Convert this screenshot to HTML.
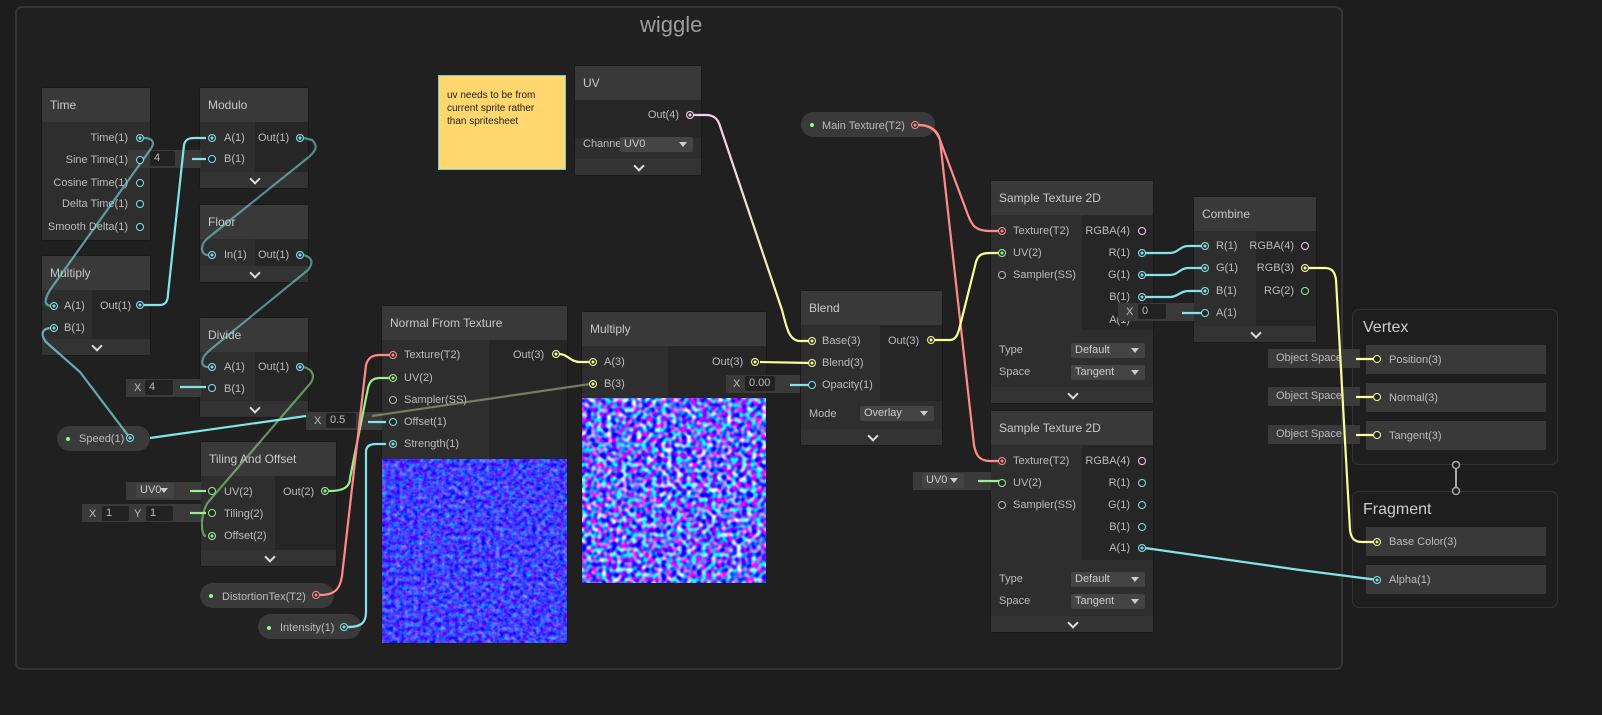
<!DOCTYPE html>
<html><head><meta charset="utf-8"><style>
*{box-sizing:border-box;margin:0;padding:0}
body{width:1602px;height:715px;background:#1d1d1d;position:relative;overflow:hidden;font-family:"Liberation Sans",sans-serif;}
.a{position:absolute}
.grp{left:15px;top:6px;width:1328px;height:664px;background:#202020;border:2px solid #353535;border-radius:7px}
.n{position:absolute;background:#2e2e2e;border-radius:2px;box-shadow:0 0 0 1px #1a1a1a}
.h{position:absolute;left:0;right:0;top:0;height:34px;background:#393939;color:#c8c8c8;font-size:12px;line-height:34px;padding-left:8px}
.o{position:absolute;background:#262626}
.bar{position:absolute;left:0;right:0;height:16px;background:#333;bottom:0}
.bar:after{content:"";position:absolute;left:50%;top:3px;width:6px;height:6px;margin-left:-3px;border-right:2px solid #ddd;border-bottom:2px solid #ddd;transform:rotate(45deg)}
.t{position:absolute;font-size:11px;color:#bcbcbc;line-height:14px;white-space:nowrap}
.r{text-align:right}
.p{position:absolute;width:8px;height:8px;border:1.5px solid;border-radius:50%;background:#262626}
.c{box-shadow:inset 0 0 0 1.5px #262626}
.pill{position:absolute;background:#3a3a3a;border-radius:13px;height:25px}
.fld{position:absolute;background:#3a3a3a;height:18px}
.in{position:absolute;background:#222;border-radius:2px;height:15px;font-size:11px;color:#bbb;line-height:15px;padding-left:4px}
.dd{position:absolute;background:#444;border-radius:2px;height:15px;font-size:11px;color:#ccc;line-height:15px;padding-left:4px}
.dd:after{content:"";position:absolute;right:6px;top:5px;border:4px solid transparent;border-top:5px solid #ccc}
.blk{position:absolute;border:1px solid #333;border-radius:7px;background:#1e1e1e}
.row{position:absolute;background:#393939}
</style></head><body>
<div class="a grp"></div>
<div class="t" style="left:640px;top:12px;font-size:22px;line-height:26px;color:#9d9d9d">wiggle</div>

<div class="a" style="left:438px;top:75px;width:128px;height:95px;background:#ffd76e;border:1px solid #7cc;"></div>
<div class="t" style="left:447px;top:89px;color:#222;font-size:10px;line-height:13px">uv needs to be from<br>current sprite rather<br>than spritesheet</div>

<div class="n" style="left:42px;top:88px;width:108px;height:152px"><div class="h">Time</div></div>
<div class="t r" style="left:42px;width:86px;top:131px">Time(1)</div>
<div class="t r" style="left:42px;width:86px;top:153px">Sine Time(1)</div>
<div class="t r" style="left:42px;width:86px;top:176px">Cosine Time(1)</div>
<div class="t r" style="left:42px;width:86px;top:197px">Delta Time(1)</div>
<div class="t r" style="left:42px;width:86px;top:220px">Smooth Delta(1)</div>

<div class="n" style="left:200px;top:88px;width:108px;height:100px"><div class="h">Modulo</div><div class="o" style="left:55px;right:0;top:34px;height:50px"></div><div class="bar"></div></div>
<div class="t" style="left:224px;top:131px">A(1)</div><div class="t" style="left:224px;top:152px">B(1)</div>
<div class="t" style="left:258px;top:131px">Out(1)</div>
<div class="fld" style="left:128px;top:150px;width:73px"></div><div class="in" style="left:150px;top:151px;width:25px">4</div>

<div class="n" style="left:200px;top:205px;width:108px;height:77px"><div class="h">Floor</div><div class="o" style="left:55px;right:0;top:34px;height:27px"></div><div class="bar"></div></div>
<div class="t" style="left:224px;top:248px">In(1)</div><div class="t" style="left:258px;top:248px">Out(1)</div>

<div class="n" style="left:42px;top:256px;width:108px;height:99px"><div class="h">Multiply</div><div class="o" style="left:50px;right:0;top:34px;height:49px"></div><div class="bar"></div></div>
<div class="t" style="left:64px;top:299px">A(1)</div><div class="t" style="left:64px;top:321px">B(1)</div>
<div class="t" style="left:100px;top:299px">Out(1)</div>

<div class="n" style="left:200px;top:318px;width:108px;height:99px"><div class="h">Divide</div><div class="o" style="left:55px;right:0;top:34px;height:49px"></div><div class="bar"></div></div>
<div class="t" style="left:224px;top:360px">A(1)</div><div class="t" style="left:224px;top:382px">B(1)</div>
<div class="t" style="left:258px;top:360px">Out(1)</div>
<div class="fld" style="left:126px;top:379px;width:75px"></div><div class="t" style="left:134px;top:381px">X</div><div class="in" style="left:145px;top:380px;width:28px">4</div>

<div class="pill" style="left:57px;top:426px;width:93px"></div>
<div class="a" style="left:66px;top:437px;width:4px;height:4px;border-radius:50%;background:#8f8"></div>
<div class="t" style="left:79px;top:432px">Speed(1)</div>

<div class="n" style="left:201px;top:442px;width:135px;height:124px"><div class="h">Tiling And Offset</div><div class="o" style="left:74px;right:0;top:34px;height:74px"></div><div class="bar"></div></div>
<div class="t" style="left:224px;top:485px">UV(2)</div><div class="t" style="left:224px;top:507px">Tiling(2)</div><div class="t" style="left:224px;top:529px">Offset(2)</div>
<div class="t" style="left:283px;top:485px">Out(2)</div>
<div class="fld" style="left:126px;top:482px;width:75px"></div><div class="dd" style="left:136px;top:483px;width:38px">UV0</div>
<div class="fld" style="left:82px;top:504px;width:119px"></div><div class="t" style="left:89px;top:507px">X</div><div class="in" style="left:102px;top:506px;width:27px">1</div><div class="t" style="left:134px;top:507px">Y</div><div class="in" style="left:146px;top:506px;width:27px">1</div>

<div class="pill" style="left:200px;top:583px;width:134px"></div>
<div class="a" style="left:209px;top:594px;width:4px;height:4px;border-radius:50%;background:#8f8"></div>
<div class="t" style="left:222px;top:590px">DistortionTex(T2)</div>
<div class="pill" style="left:258px;top:614px;width:103px"></div>
<div class="a" style="left:267px;top:626px;width:4px;height:4px;border-radius:50%;background:#8f8"></div>
<div class="t" style="left:280px;top:621px">Intensity(1)</div>

<div class="n" style="left:382px;top:306px;width:185px;height:337px"><div class="h">Normal From Texture</div><div class="o" style="left:107px;right:0;top:34px;height:119px"></div></div>
<div class="t" style="left:404px;top:348px">Texture(T2)</div><div class="t" style="left:404px;top:371px">UV(2)</div><div class="t" style="left:404px;top:393px">Sampler(SS)</div><div class="t" style="left:404px;top:415px">Offset(1)</div><div class="t" style="left:404px;top:437px">Strength(1)</div>
<div class="t" style="left:513px;top:348px">Out(3)</div>
<div class="fld" style="left:306px;top:412px;width:76px"></div><div class="t" style="left:314px;top:414px">X</div><div class="in" style="left:326px;top:413px;width:30px">0.5</div>
<svg class="a" style="left:382px;top:459px" width="185" height="184"><filter id="f1" x="0" y="0" width="100%" height="100%" color-interpolation-filters="sRGB"><feTurbulence type="fractalNoise" baseFrequency="0.22" numOctaves="2" seed="3"/><feColorMatrix values="0.9 0 0 0 -0.2  0 1.1 0 0 -0.3  0 0 0 0 1  0 0 0 0 1"/></filter><rect width="185" height="184" filter="url(#f1)"/></svg>

<div class="n" style="left:575px;top:66px;width:126px;height:109px"><div class="h">UV</div><div class="o" style="left:0;right:0;top:34px;height:38px"></div><div class="bar"></div></div>
<div class="t r" style="left:575px;width:104px;top:108px">Out(4)</div>
<div class="t" style="left:583px;top:137px">Channe</div><div class="dd" style="left:620px;top:137px;width:73px">UV0</div>

<div class="n" style="left:582px;top:312px;width:184px;height:271px"><div class="h">Multiply</div><div class="o" style="left:86px;right:0;top:34px;height:52px"></div></div>
<div class="t" style="left:604px;top:355px">A(3)</div><div class="t" style="left:604px;top:377px">B(3)</div>
<div class="t" style="left:712px;top:355px">Out(3)</div>
<svg class="a" style="left:582px;top:398px" width="184" height="185"><filter id="f2" x="0" y="0" width="100%" height="100%" color-interpolation-filters="sRGB"><feTurbulence type="fractalNoise" baseFrequency="0.2" numOctaves="1" seed="7"/><feColorMatrix values="3 0 0 0 -1.1  0 3 0 0 -1.1  0 0 0 0 1  0 0 0 0 1"/></filter><rect width="184" height="185" filter="url(#f2)"/></svg>
<div class="fld" style="left:726px;top:375px;width:75px"></div><div class="t" style="left:733px;top:377px">X</div><div class="in" style="left:745px;top:376px;width:30px">0.00</div>

<div class="pill" style="left:801px;top:112px;width:134px"></div>
<div class="a" style="left:810px;top:123px;width:4px;height:4px;border-radius:50%;background:#8f8"></div>
<div class="t" style="left:822px;top:119px">Main Texture(T2)</div>

<div class="n" style="left:801px;top:291px;width:141px;height:154px"><div class="h">Blend</div><div class="o" style="left:79px;right:0;top:34px;height:76px"></div><div class="bar"></div></div>
<div class="t" style="left:822px;top:334px">Base(3)</div><div class="t" style="left:822px;top:356px">Blend(3)</div><div class="t" style="left:822px;top:378px">Opacity(1)</div>
<div class="t" style="left:888px;top:334px">Out(3)</div>
<div class="t" style="left:809px;top:407px">Mode</div><div class="dd" style="left:860px;top:406px;width:74px">Overlay</div>

<div class="n" style="left:991px;top:181px;width:162px;height:222px"><div class="h">Sample Texture 2D</div><div class="o" style="left:91px;right:0;top:34px;height:115px"></div><div class="bar"></div></div>
<div class="t" style="left:1013px;top:224px">Texture(T2)</div><div class="t" style="left:1013px;top:246px">UV(2)</div><div class="t" style="left:1013px;top:268px">Sampler(SS)</div>
<div class="t r" style="left:1070px;width:60px;top:224px">RGBA(4)</div><div class="t r" style="left:1070px;width:60px;top:246px">R(1)</div><div class="t r" style="left:1070px;width:60px;top:268px">G(1)</div><div class="t r" style="left:1070px;width:60px;top:290px">B(1)</div><div class="t r" style="left:1070px;width:60px;top:313px">A(1)</div>
<div class="t" style="left:999px;top:343px">Type</div><div class="dd" style="left:1071px;top:343px;width:74px">Default</div>
<div class="t" style="left:999px;top:365px">Space</div><div class="dd" style="left:1071px;top:365px;width:74px">Tangent</div>

<div class="n" style="left:991px;top:411px;width:162px;height:221px"><div class="h">Sample Texture 2D</div><div class="o" style="left:91px;right:0;top:34px;height:115px"></div><div class="bar"></div></div>
<div class="t" style="left:1013px;top:454px">Texture(T2)</div><div class="t" style="left:1013px;top:476px">UV(2)</div><div class="t" style="left:1013px;top:498px">Sampler(SS)</div>
<div class="t r" style="left:1070px;width:60px;top:454px">RGBA(4)</div><div class="t r" style="left:1070px;width:60px;top:476px">R(1)</div><div class="t r" style="left:1070px;width:60px;top:498px">G(1)</div><div class="t r" style="left:1070px;width:60px;top:520px">B(1)</div><div class="t r" style="left:1070px;width:60px;top:541px">A(1)</div>
<div class="t" style="left:999px;top:572px">Type</div><div class="dd" style="left:1071px;top:572px;width:74px">Default</div>
<div class="t" style="left:999px;top:594px">Space</div><div class="dd" style="left:1071px;top:594px;width:74px">Tangent</div>
<div class="fld" style="left:913px;top:472px;width:78px"></div><div class="dd" style="left:922px;top:473px;width:42px">UV0</div>

<div class="n" style="left:1194px;top:197px;width:122px;height:145px"><div class="h">Combine</div><div class="o" style="left:62px;right:0;top:34px;height:99px"></div><div class="bar"></div></div>
<div class="t" style="left:1216px;top:239px">R(1)</div><div class="t" style="left:1216px;top:261px">G(1)</div><div class="t" style="left:1216px;top:284px">B(1)</div><div class="t" style="left:1216px;top:306px">A(1)</div>
<div class="t r" style="left:1240px;width:54px;top:239px">RGBA(4)</div><div class="t r" style="left:1240px;width:54px;top:261px">RGB(3)</div><div class="t r" style="left:1240px;width:54px;top:284px">RG(2)</div>
<div class="fld" style="left:1118px;top:303px;width:76px"></div><div class="t" style="left:1126px;top:305px">X</div><div class="in" style="left:1138px;top:304px;width:28px">0</div>

<div class="blk" style="left:1352px;top:309px;width:206px;height:156px"></div>
<div class="t" style="left:1363px;top:318px;font-size:16px;line-height:20px;color:#ccc">Vertex</div>
<div class="row" style="left:1366px;top:345px;width:180px;height:29px"></div><div class="t" style="left:1389px;top:353px">Position(3)</div>
<div class="row" style="left:1366px;top:383px;width:180px;height:29px"></div><div class="t" style="left:1389px;top:391px">Normal(3)</div>
<div class="row" style="left:1366px;top:421px;width:180px;height:29px"></div><div class="t" style="left:1389px;top:429px">Tangent(3)</div>
<div class="blk" style="left:1352px;top:491px;width:206px;height:117px"></div>
<div class="t" style="left:1363px;top:500px;font-size:16px;line-height:20px;color:#ccc">Fragment</div>
<div class="row" style="left:1366px;top:527px;width:180px;height:29px"></div><div class="t" style="left:1389px;top:535px">Base Color(3)</div>
<div class="row" style="left:1366px;top:565px;width:180px;height:29px"></div><div class="t" style="left:1389px;top:573px">Alpha(1)</div>
<div class="fld" style="left:1268px;top:349px;width:92px;height:19px"></div><div class="t" style="left:1276px;top:351px">Object Space</div>
<div class="fld" style="left:1268px;top:387px;width:92px;height:19px"></div><div class="t" style="left:1276px;top:389px">Object Space</div>
<div class="fld" style="left:1268px;top:425px;width:92px;height:19px"></div><div class="t" style="left:1276px;top:427px">Object Space</div>

<svg class="a" style="left:0;top:0" width="1602" height="715" fill="none" stroke-width="2.2">
<defs><linearGradient id="gu" gradientUnits="userSpaceOnUse" x1="700" y1="115" x2="812" y2="341"><stop offset="0" stop-color="#fbcbf4"/><stop offset="1" stop-color="#f6ff9a"/></linearGradient></defs>
<g stroke="#84e4e7">
<path d="M144 138 C152 138 156 142 150 150 L50 290 C44 300 44 306 52 306" opacity=".6"/>
<path d="M144 305 L160 305 C166 305 168 300 168 294 L184 145 C185 140 188 138 194 138 L206 138"/>
<path d="M304 138 L312 140 C318 146 316 150 310 156 L208 238 C200 244 200 255 208 255" opacity=".55"/>
<path d="M304 255 C312 258 314 262 308 270 L210 350 C200 358 200 367 208 367" opacity=".55"/>
<path d="M52 328 C42 328 40 334 46 342 L80 372 L130 438" opacity=".7"/>
<path d="M150 438 L306 416"/>
<path d="M304 367 C314 370 316 378 308 386 L210 500 C200 510 200 536 206 536" stroke="#9aef92" opacity=".55"/>
<path d="M348 627 C362 627 366 622 366 612 L366 452 C366 446 370 444 376 444 L386 444"/>
<path d="M1145 548 L1300 570 L1378 580"/>
<path d="M1146 253 L1170 253 C1178 253 1180 246 1188 246 L1206 246"/>
<path d="M1146 275 L1170 275 C1178 275 1180 268 1188 268 L1206 268"/>
<path d="M1146 297 L1170 297 C1178 297 1180 291 1188 291 L1206 291"/>
<path d="M1182 313 L1206 313"/><path d="M368 422 L386 422"/><path d="M192 159 L206 159"/><path d="M180 387 L206 387"/><path d="M790 385 L812 385"/>
</g>
<path d="M372 416 L590 384" stroke="#9ca070" opacity=".7"/>
<g stroke="#9aef92">
<path d="M329 491 C345 491 350 486 350 478 L368 388 C370 380 374 378 380 378 L392 378"/>
<path d="M190 491 L206 491"/><path d="M190 513 L206 513"/><path d="M978 481 L1004 481"/>
</g>
<g stroke="#ff8b8b">
<path d="M320 595 C336 595 340 588 342 576 L366 365 C368 358 372 355 380 355 L392 355"/>
<path d="M918 125 C930 125 936 130 940 140 L968 215 C972 226 976 231 990 231 L1002 231"/>
<path d="M918 125 C930 125 938 130 940 140 L974 445 C976 456 980 461 990 461 L1002 461"/>
</g>
<g stroke="#f6ff9a">
<path d="M559 354 C568 354 570 362 580 362 L592 362"/>
<path d="M760 362 L812 363"/>
<path d="M935 340 L950 340 C956 340 958 334 960 326 L976 262 C978 255 982 253 990 253 L1002 253"/>
<path d="M1309 268 L1325 268 C1332 268 1335 272 1336 280 L1350 530 C1351 538 1354 542 1362 542 L1378 542"/>
<path d="M1356 359 L1378 359"/><path d="M1356 397 L1378 397"/><path d="M1356 435 L1378 435"/>
</g>
<path d="M693 115 L706 115 C714 115 718 119 720 126 L782 310 C786 324 788 341 800 341 L812 341" stroke="url(#gu)"/>
<path d="M1456 466 L1456 490" stroke="#aaa" stroke-width="2"/>
<circle cx="1456" cy="465" r="3.5" fill="#1e1e1e" stroke="#aaa" stroke-width="1.5"/><circle cx="1456" cy="491" r="3.5" fill="#1e1e1e" stroke="#aaa" stroke-width="1.5"/>
</svg>

<div class="p c" style="left:136px;top:134px;border-color:#84e4e7;background:#84e4e7"></div>
<div class="p" style="left:136px;top:156px;border-color:#84e4e7"></div>
<div class="p" style="left:136px;top:179px;border-color:#84e4e7"></div>
<div class="p" style="left:136px;top:200px;border-color:#84e4e7"></div>
<div class="p" style="left:136px;top:223px;border-color:#84e4e7"></div>
<div class="p c" style="left:208px;top:134px;border-color:#84e4e7;background:#84e4e7"></div>
<div class="p" style="left:208px;top:155px;border-color:#84e4e7"></div>
<div class="p c" style="left:296px;top:134px;border-color:#84e4e7;background:#84e4e7"></div>
<div class="p c" style="left:208px;top:251px;border-color:#84e4e7;background:#84e4e7"></div>
<div class="p c" style="left:296px;top:251px;border-color:#84e4e7;background:#84e4e7"></div>
<div class="p c" style="left:50px;top:302px;border-color:#84e4e7;background:#84e4e7"></div>
<div class="p c" style="left:50px;top:324px;border-color:#84e4e7;background:#84e4e7"></div>
<div class="p c" style="left:136px;top:301px;border-color:#84e4e7;background:#84e4e7"></div>
<div class="p c" style="left:208px;top:363px;border-color:#84e4e7;background:#84e4e7"></div>
<div class="p" style="left:208px;top:384px;border-color:#84e4e7"></div>
<div class="p c" style="left:296px;top:363px;border-color:#84e4e7;background:#84e4e7"></div>
<div class="p c" style="left:126px;top:434px;border-color:#84e4e7;background:#84e4e7"></div>
<div class="p" style="left:208px;top:487px;border-color:#9aef92"></div>
<div class="p" style="left:208px;top:509px;border-color:#9aef92"></div>
<div class="p c" style="left:208px;top:532px;border-color:#9aef92;background:#9aef92"></div>
<div class="p c" style="left:321px;top:487px;border-color:#9aef92;background:#9aef92"></div>
<div class="p c" style="left:312px;top:591px;border-color:#ff8b8b;background:#ff8b8b"></div>
<div class="p c" style="left:340px;top:623px;border-color:#84e4e7;background:#84e4e7"></div>
<div class="p c" style="left:389px;top:351px;border-color:#ff8b8b;background:#ff8b8b"></div>
<div class="p c" style="left:389px;top:374px;border-color:#9aef92;background:#9aef92"></div>
<div class="p" style="left:389px;top:396px;border-color:#bbb"></div>
<div class="p" style="left:389px;top:418px;border-color:#84e4e7"></div>
<div class="p c" style="left:389px;top:440px;border-color:#84e4e7;background:#84e4e7"></div>
<div class="p c" style="left:552px;top:350px;border-color:#f6ff9a;background:#f6ff9a"></div>
<div class="p c" style="left:686px;top:111px;border-color:#fbcbf4;background:#fbcbf4"></div>
<div class="p c" style="left:589px;top:358px;border-color:#f6ff9a;background:#f6ff9a"></div>
<div class="p c" style="left:589px;top:380px;border-color:#f6ff9a;background:#f6ff9a"></div>
<div class="p c" style="left:751px;top:358px;border-color:#f6ff9a;background:#f6ff9a"></div>
<div class="p c" style="left:911px;top:121px;border-color:#ff8b8b;background:#ff8b8b"></div>
<div class="p c" style="left:808px;top:337px;border-color:#f6ff9a;background:#f6ff9a"></div>
<div class="p c" style="left:808px;top:359px;border-color:#f6ff9a;background:#f6ff9a"></div>
<div class="p" style="left:808px;top:381px;border-color:#84e4e7"></div>
<div class="p c" style="left:927px;top:336px;border-color:#f6ff9a;background:#f6ff9a"></div>
<div class="p c" style="left:998px;top:227px;border-color:#ff8b8b;background:#ff8b8b"></div>
<div class="p c" style="left:998px;top:249px;border-color:#9aef92;background:#9aef92"></div>
<div class="p" style="left:998px;top:271px;border-color:#bbb"></div>
<div class="p" style="left:1138px;top:227px;border-color:#fbcbf4"></div>
<div class="p c" style="left:1138px;top:249px;border-color:#84e4e7;background:#84e4e7"></div>
<div class="p c" style="left:1138px;top:271px;border-color:#84e4e7;background:#84e4e7"></div>
<div class="p c" style="left:1138px;top:293px;border-color:#84e4e7;background:#84e4e7"></div>
<div class="p c" style="left:998px;top:457px;border-color:#ff8b8b;background:#ff8b8b"></div>
<div class="p" style="left:998px;top:479px;border-color:#9aef92"></div>
<div class="p" style="left:998px;top:501px;border-color:#bbb"></div>
<div class="p" style="left:1138px;top:457px;border-color:#fbcbf4"></div>
<div class="p" style="left:1138px;top:479px;border-color:#84e4e7"></div>
<div class="p" style="left:1138px;top:501px;border-color:#84e4e7"></div>
<div class="p" style="left:1138px;top:523px;border-color:#84e4e7"></div>
<div class="p c" style="left:1138px;top:544px;border-color:#84e4e7;background:#84e4e7"></div>
<div class="p c" style="left:1201px;top:242px;border-color:#84e4e7;background:#84e4e7"></div>
<div class="p c" style="left:1201px;top:264px;border-color:#84e4e7;background:#84e4e7"></div>
<div class="p c" style="left:1201px;top:287px;border-color:#84e4e7;background:#84e4e7"></div>
<div class="p" style="left:1201px;top:309px;border-color:#84e4e7"></div>
<div class="p" style="left:1301px;top:242px;border-color:#fbcbf4"></div>
<div class="p c" style="left:1301px;top:264px;border-color:#f6ff9a;background:#f6ff9a"></div>
<div class="p" style="left:1301px;top:287px;border-color:#9aef92"></div>
<div class="p" style="left:1373px;top:355px;border-color:#f6ff9a"></div>
<div class="p" style="left:1373px;top:393px;border-color:#f6ff9a"></div>
<div class="p" style="left:1373px;top:431px;border-color:#f6ff9a"></div>
<div class="p c" style="left:1373px;top:538px;border-color:#f6ff9a;background:#f6ff9a"></div>
<div class="p c" style="left:1373px;top:576px;border-color:#84e4e7;background:#84e4e7"></div>
</body></html>
